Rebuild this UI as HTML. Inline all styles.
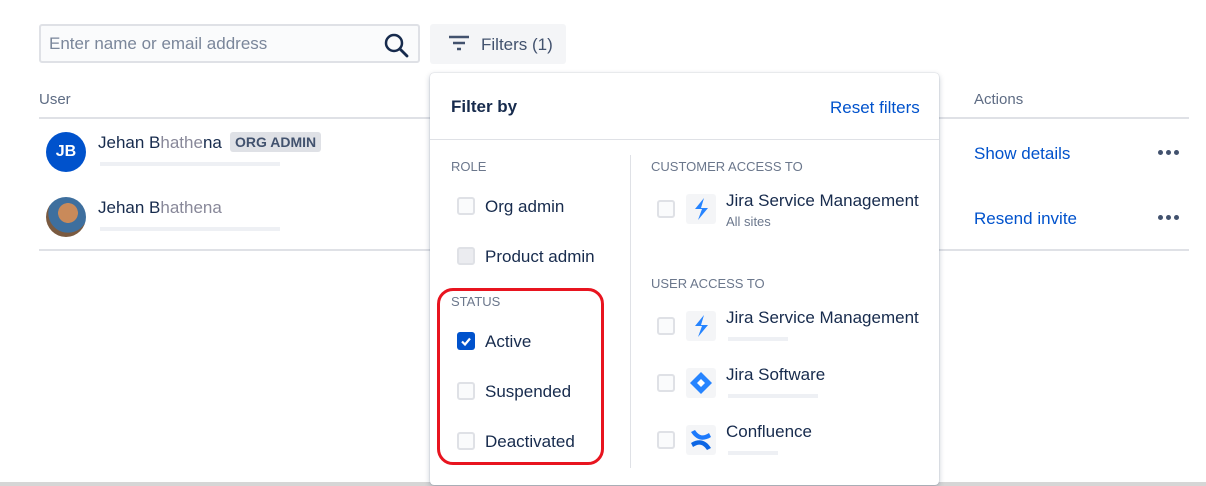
<!DOCTYPE html>
<html><head><style>
body{margin:0;width:1206px;height:486px;background:#fff;position:relative;overflow:hidden;font-family:"Liberation Sans",sans-serif;color:#172b4d}
.a{position:absolute}
.cb{position:absolute;width:14px;height:14px;border:2px solid #dfe1e6;border-radius:3px;background:#fafbfc}
.lbl{font-size:13px;color:#6b778c}
.t{font-size:17px}
.ic{position:absolute;width:30px;height:30px;background:#f4f5f7;border-radius:3px}
.sub{position:absolute;height:4px;background:#eef0f4}
.dots{position:absolute;width:24px;height:6px}
.dots i{position:absolute;top:0;width:5px;height:5px;border-radius:50%;background:#42526e}
</style></head><body>
<div class="a" style="left:39px;top:24px;width:377px;height:35px;border:2px solid #dfe1e6;border-radius:3px;background:#fafbfc"></div>
<div class="a" style="left:49px;top:34px;font-size:17px;color:#7a869a">Enter name or email address</div>
<svg class="a" style="left:382px;top:31px" width="28" height="28" viewBox="0 0 28 28"><circle cx="12" cy="12" r="8" fill="none" stroke="#172b4d" stroke-width="2.5"/><path d="M18 18l7 7" stroke="#172b4d" stroke-width="2.8" stroke-linecap="round"/></svg>
<div class="a" style="left:430px;top:24px;width:136px;height:40px;background:#f4f5f7;border-radius:3px"></div>
<svg class="a" style="left:448px;top:34px" width="22" height="18"><path d="M1 3h20M5 9h12M9 15h4" stroke="#42526e" stroke-width="2.4"/></svg>
<div class="a" style="left:481px;top:35px;font-size:17px;color:#42526e">Filters (1)</div>
<div class="a" style="left:39px;top:91px;font-size:15px;color:#5e6c84">User</div>
<div class="a" style="left:974px;top:91px;font-size:15px;color:#5e6c84">Actions</div>
<div class="a" style="left:39px;top:117px;width:1150px;height:2px;background:#dfe1e6"></div>
<div class="a" style="left:39px;top:249px;width:1150px;height:2px;background:#dfe1e6"></div>
<div class="a" style="left:46px;top:132px;width:40px;height:40px;border-radius:50%;background:#0052cc;color:#fff;font-weight:bold;font-size:16px;text-align:center;line-height:40px">JB</div>
<div class="a" style="left:98px;top:133px;font-size:17px">Jehan B<span style="color:#889">hathe</span>na</div>
<div class="a" style="left:230px;top:132px;padding:0 5px;height:20px;background:#dfe1e6;border-radius:3px;font-size:14px;font-weight:bold;color:#42526e;line-height:20px">ORG ADMIN</div>
<div class="sub" style="left:100px;top:162px;width:180px"></div>
<div class="a" style="left:46px;top:197px;width:40px;height:40px;border-radius:50%;background:radial-gradient(circle at 55% 40%,#c98a5a 0 30%,#3e6f9e 31% 60%,#7a5a40 61%)"></div>
<div class="a" style="left:98px;top:198px;font-size:17px">Jehan B<span style="color:#889">hathena</span></div>
<div class="sub" style="left:100px;top:227px;width:180px"></div>
<div class="a" style="left:974px;top:144px;font-size:17px;color:#0052cc">Show details</div>
<div class="a" style="left:974px;top:209px;font-size:17px;color:#0052cc">Resend invite</div>
<div class="dots" style="left:1158px;top:150px"><i style="left:0"></i><i style="left:8px"></i><i style="left:16px"></i></div>
<div class="dots" style="left:1158px;top:215px"><i style="left:0"></i><i style="left:8px"></i><i style="left:16px"></i></div>
<div class="a" style="left:0;top:482px;width:1206px;height:4px;background:#d6d6d6"></div>
<div class="a" style="left:430px;top:73px;width:509px;height:412px;background:#fff;border-radius:4px;box-shadow:0 2px 6px rgba(9,30,66,.25),0 0 1px rgba(9,30,66,.3)"></div>
<div class="a" style="left:451px;top:97px;font-size:17px;font-weight:bold">Filter by</div>
<div class="a" style="left:830px;top:98px;font-size:17px;color:#0052cc">Reset filters</div>
<div class="a" style="left:430px;top:139px;width:509px;height:1px;background:#dfe1e6"></div>
<div class="a" style="left:630px;top:155px;width:1px;height:313px;background:#dfe1e6"></div>
<div class="a lbl" style="left:451px;top:159px">ROLE</div>
<div class="cb" style="left:457px;top:197px"></div><div class="a t" style="left:485px;top:197px">Org admin</div>
<div class="cb" style="left:457px;top:247px;background:#ebecf0"></div><div class="a t" style="left:485px;top:247px">Product admin</div>
<div class="a lbl" style="left:451px;top:294px">STATUS</div>
<div class="a" style="left:457px;top:332px;width:18px;height:18px;border-radius:3px;background:#0052cc"></div>
<svg class="a" style="left:457px;top:332px" width="18" height="18"><path d="M5 9.5l3 3 5-6" stroke="#fff" stroke-width="2.2" fill="none"/></svg>
<div class="a t" style="left:485px;top:332px">Active</div>
<div class="cb" style="left:457px;top:382px"></div><div class="a t" style="left:485px;top:382px">Suspended</div>
<div class="cb" style="left:457px;top:432px"></div><div class="a t" style="left:485px;top:432px">Deactivated</div>
<div class="a" style="left:437px;top:288px;width:161px;height:171px;border:3px solid #e8141f;border-radius:16px"></div>
<div class="a lbl" style="left:651px;top:159px">CUSTOMER ACCESS TO</div>
<div class="a lbl" style="left:651px;top:276px">USER ACCESS TO</div>
<div class="cb" style="left:657px;top:200px"></div><div class="ic" style="left:686px;top:194px"></div>
<svg class="a" style="left:690px;top:197px" width="22" height="24"><path d="M14 1L5 12h7l-4 11 10-12h-7z" fill="#2684ff"/></svg>
<div class="a t" style="left:726px;top:191px">Jira Service Management</div>
<div class="a" style="left:726px;top:214px;font-size:13px;color:#6b778c">All sites</div>
<div class="cb" style="left:657px;top:317px"></div><div class="ic" style="left:686px;top:311px"></div>
<svg class="a" style="left:690px;top:314px" width="22" height="24"><path d="M14 1L5 12h7l-4 11 10-12h-7z" fill="#2684ff"/></svg>
<div class="a t" style="left:726px;top:308px">Jira Service Management</div>
<div class="sub" style="left:728px;top:337px;width:60px"></div>
<div class="cb" style="left:657px;top:374px"></div><div class="ic" style="left:686px;top:368px"></div>
<svg class="a" style="left:689px;top:371px" width="24" height="24"><path d="M12 1L23 12 12 23 1 12z" fill="#2684ff"/><path d="M12 8l4 4-4 4-4-4z" fill="#fff"/></svg>
<div class="a t" style="left:726px;top:365px">Jira Software</div>
<div class="sub" style="left:728px;top:394px;width:90px"></div>
<div class="cb" style="left:657px;top:431px"></div><div class="ic" style="left:686px;top:425px"></div>
<svg class="a" style="left:689px;top:428px" width="24" height="24"><path d="M2 4l4-2c4 6 8 7 14 3l2 4c-8 5-15 3-20-5z" fill="#1d7afc"/><path d="M22 20l-4 2c-4-6-8-7-14-3l-2-4c8-5 15-3 20 5z" fill="#0c66e4"/></svg>
<div class="a t" style="left:726px;top:422px">Confluence</div>
<div class="sub" style="left:728px;top:451px;width:50px"></div>
</body></html>
